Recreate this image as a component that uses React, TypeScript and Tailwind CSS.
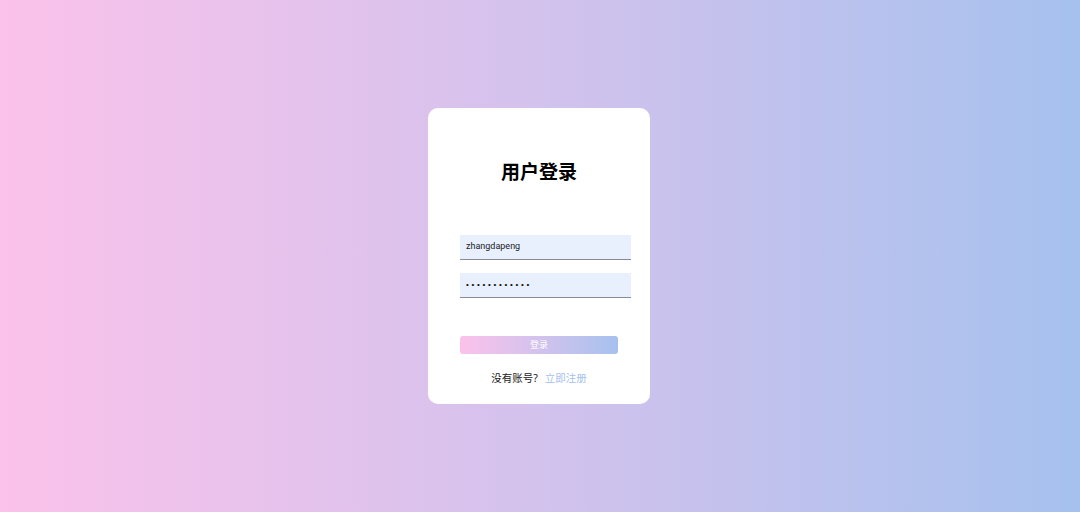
import React from "react";

export default function App() {
  return (
    <div
      className="w-full h-[512px] flex items-center justify-center bg-gradient-to-r from-[#fbc2eb] to-[#a6c1ee]"
      style={{ fontFamily: '"Noto Sans", "Noto Sans CJK SC", sans-serif' }}
    >
      <div className="w-[222px] h-[296px] bg-white rounded-[10px] flex flex-col px-[32px] -translate-x-[1px]">
        <div className="mt-[50px] h-[28px] flex items-center justify-center text-[19px] font-bold text-black leading-none">
          用户登录
        </div>
        <div className="mt-[49px] w-[171px] h-[25px] bg-[#e8f0fe] border-b border-[#8a8a95] flex items-center pl-[6px] text-[9px] text-[#222]" style={{ fontFamily: 'Roboto, "Noto Sans", sans-serif' }}>
          zhangdapeng
        </div>
        <div
          className="mt-[13px] w-[171px] h-[25px] bg-[#e8f0fe] border-b border-[#8a8a95] flex items-center pl-[6px] text-[8px] text-[#111] tracking-[2.7px]"
          style={{ fontFamily: '"Liberation Sans", sans-serif' }}
        >
          ••••••••••••
        </div>
        <div className="mt-[38px] w-[158px] h-[18px] rounded-[3px] bg-gradient-to-r from-[#fbc2eb] to-[#a6c1ee] flex items-center justify-center text-[9px] text-white">
          登录
        </div>
        <div className="mt-[19px] flex items-center justify-center text-[10.5px] leading-none">
          <span className="text-[#222]">没有账号?</span>
          <span className="ml-[7px] text-[#a6c1ee]">立即注册</span>
        </div>
      </div>
    </div>
  );
}
